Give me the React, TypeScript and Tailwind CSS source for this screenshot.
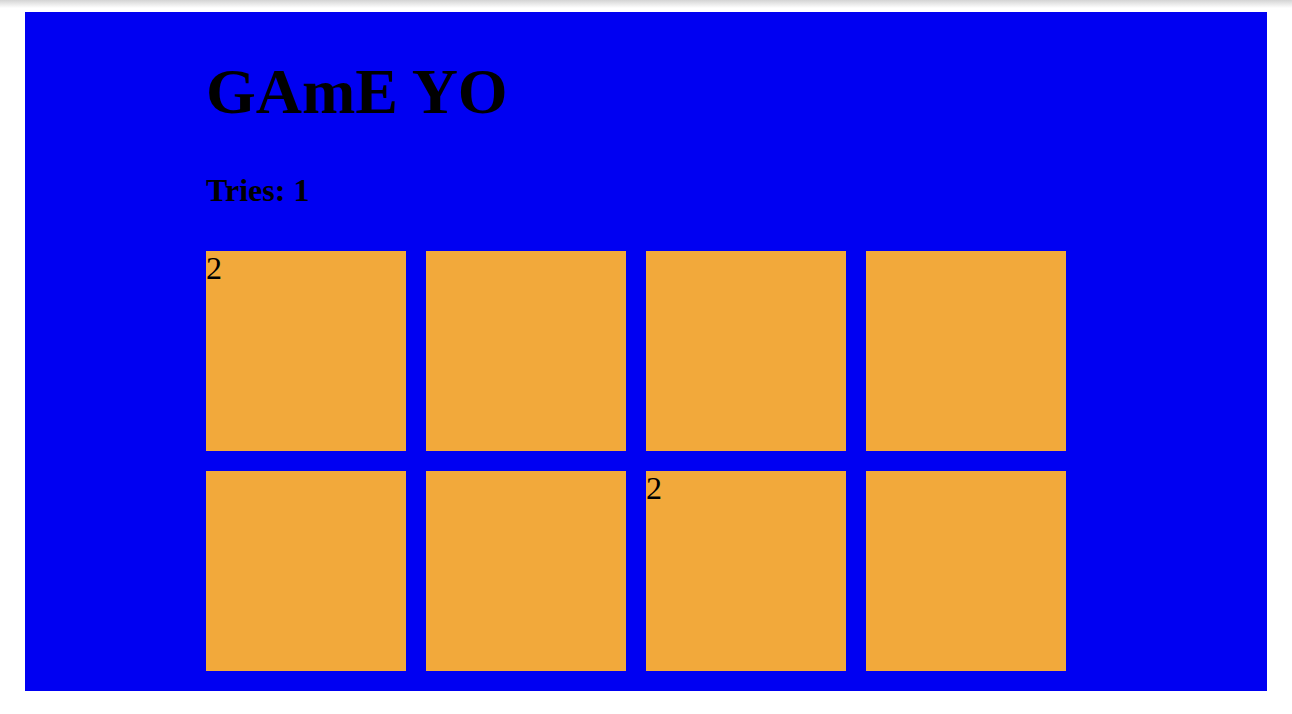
import React from 'react';

const cards = ['2', '', '', '', '', '', '2', ''];

export default function App() {
  return (
    <div className="min-h-screen bg-white font-['Liberation_Serif',serif] text-black">
      <div className="h-[8px] bg-gradient-to-b from-[#d4d4d4] to-white" />
      <div className="mx-[25px] mt-[4px] bg-[#0000f2] pt-[44px] pb-[20px] pl-[181px]">
        <h1 className="text-[64px] font-bold leading-[71px]">GAmE YO</h1>
        <h2 className="mt-[46px] text-[32px] font-bold leading-[35px]">Tries: 1</h2>
        <div className="mt-[43px] grid w-[860px] grid-cols-4 gap-[20px]">
          {cards.map((value, idx) => (
            <div key={idx} className="h-[200px] w-[200px] bg-[#f2a93b] text-[32px] leading-[35px]">
              {value}
            </div>
          ))}
        </div>
      </div>
    </div>
  );
}
